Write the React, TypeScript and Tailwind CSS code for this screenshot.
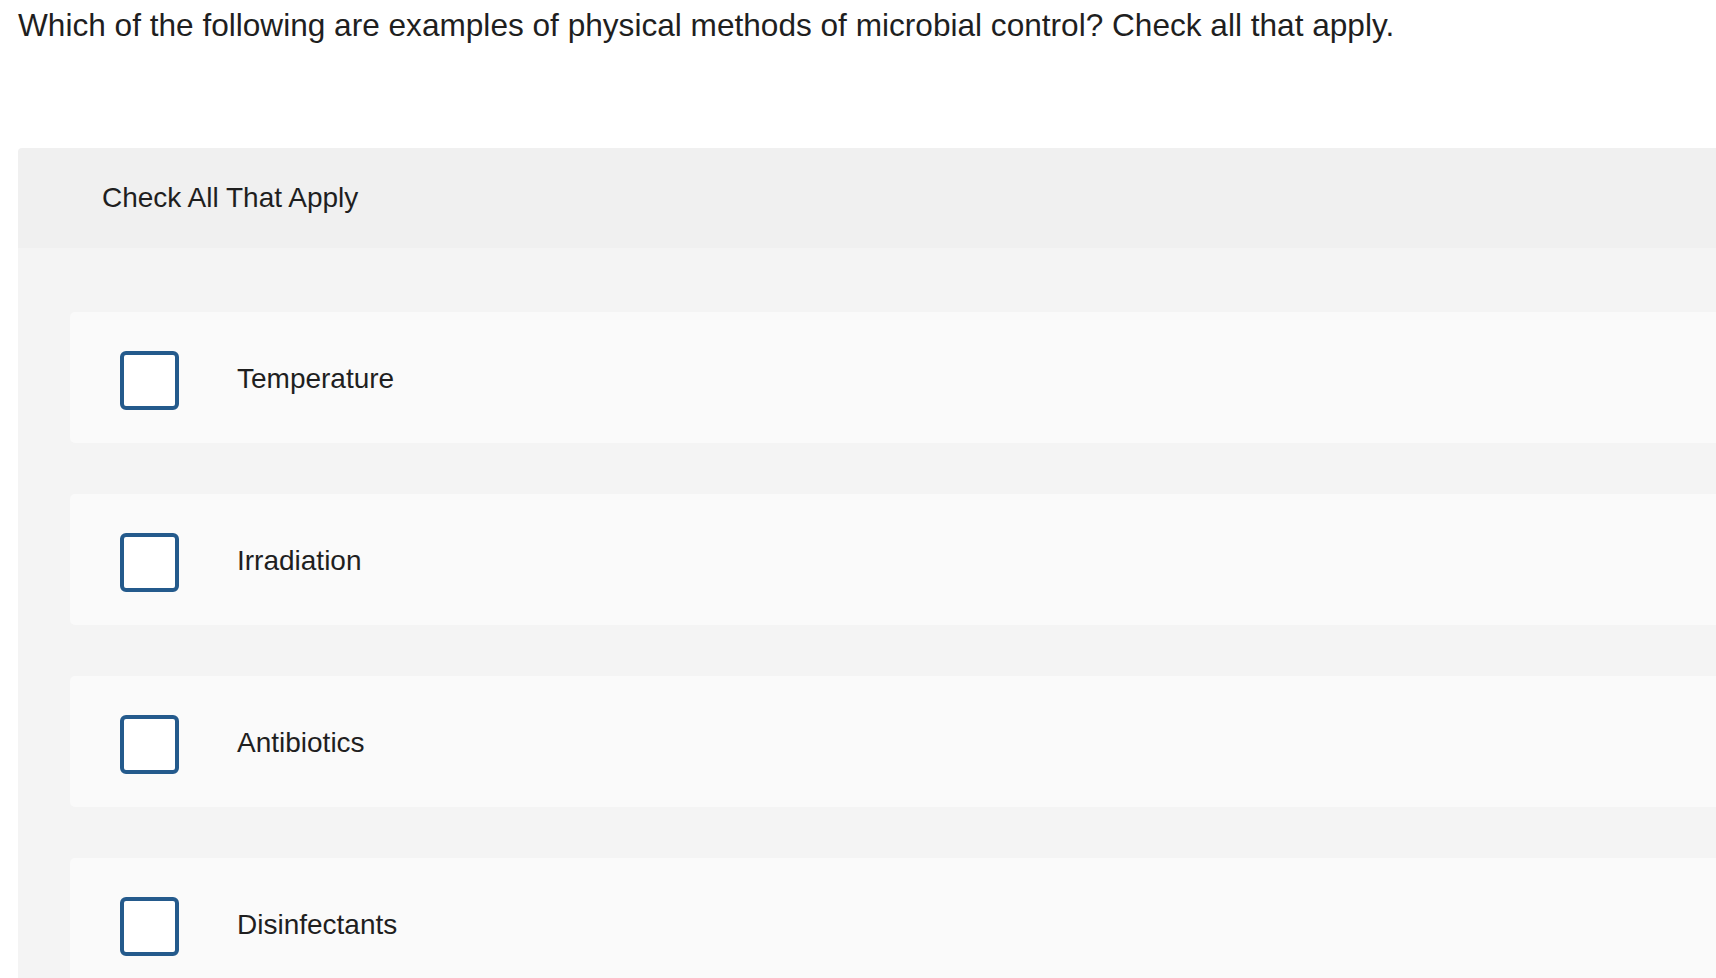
const options = ["Temperature", "Irradiation", "Antibiotics", "Disinfectants"];

function Checkbox() {
  return (
    <div className="w-[59px] h-[59px] shrink-0 rounded-[6px] border-4 border-[#245a8c] bg-white" />
  );
}

export default function App() {
  return (
    <div
      className="w-[1716px] h-[978px] overflow-hidden bg-white text-[#1f1f1f]"
      style={{ fontFamily: '"Liberation Sans", Arial, sans-serif' }}
    >
      <p className="pl-[18px] pt-[5px] text-[31.6px] leading-[40px]">
        Which of the following are examples of physical methods of microbial control? Check all that apply.
      </p>

      <div className="ml-[18px] mt-[103px] rounded-tl-[4px] overflow-hidden">
        <div className="h-[100px] bg-[#f0f0f0] flex items-center pl-[84px] text-[28px]">
          Check All That Apply
        </div>
        <div className="bg-[#f4f4f4] pt-[64px] pl-[52px] flex flex-col gap-[51px] pb-[40px]">
          {options.map((o) => (
            <div
              key={o}
              className="h-[131px] bg-[#fafafa] rounded-l-[5px] flex items-center pl-[50px] pt-[6px]"
            >
              <Checkbox />
              <span className="ml-[58px] text-[28px] -mt-[3px]">{o}</span>
            </div>
          ))}
        </div>
      </div>
    </div>
  );
}
